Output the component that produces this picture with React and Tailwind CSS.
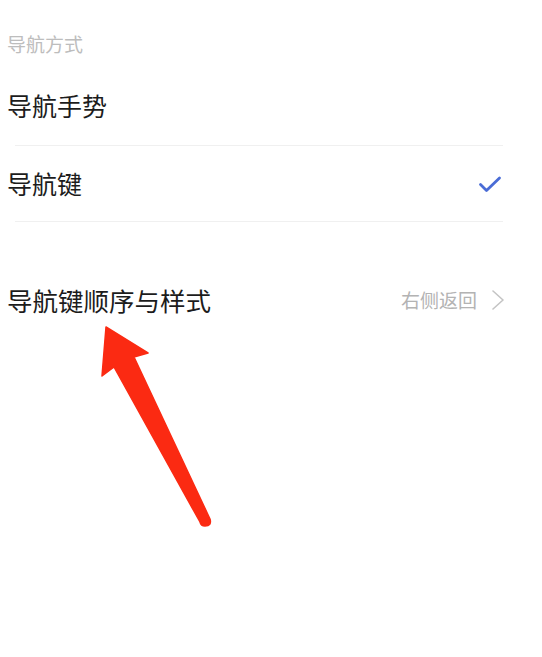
import React from 'react';

const font = { fontFamily: '"Noto Sans CJK SC", "Noto Sans", sans-serif' };

const Divider = () => <div className="ml-[15px] h-px w-[488px] bg-[#f0f0f0]" />;

const Check = () => (
  <svg width="24" height="18" viewBox="0 0 24 18" fill="none">
    <path d="M2.5 9.5 L8.5 15.5 L21.5 3" stroke="#4a6cd6" strokeWidth="2.8" strokeLinecap="round" strokeLinejoin="round" />
  </svg>
);

const Chevron = () => (
  <svg width="14" height="20" viewBox="0 0 14 20" fill="none">
    <path d="M2 1 L12 10 L2 19" stroke="#c4c4c4" strokeWidth="1.6" strokeLinecap="round" strokeLinejoin="round" />
  </svg>
);

const App = () => {
  return (
    <div className="relative h-[657px] w-[542px] overflow-hidden bg-white" style={font}>
      <div className="pl-[7px] pt-[32px] text-[19px] leading-[24px] text-[#bdbdbd]">导航方式</div>

      <div className="mt-[10px] flex h-[79px] items-center pl-[7px] text-[25px] text-[#1c1c1c]">导航手势</div>
      <Divider />

      <div className="flex h-[75px] items-center justify-between pl-[7px] pr-[40px] text-[25px] text-[#1c1c1c]">
        <span>导航键</span>
        <Check />
      </div>
      <Divider />

      <div className="mt-[40px] flex h-[76px] items-center justify-between pl-[7px] pr-[37px]">
        <span className="text-[25.5px] text-[#1c1c1c]">导航键顺序与样式</span>
        <div className="flex items-center gap-[14px]">
          <span className="text-[19px] text-[#b3b3b3]">右侧返回</span>
          <Chevron />
        </div>
      </div>

      {/* red annotation arrow */}
      <svg className="absolute left-0 top-0" width="542" height="657" viewBox="0 0 542 657">
        <path
          d="M106 327 L148 353 L134 357 L210 519 Q212 526 205 526 Q201 526 200 522 L114 367 L102 376 Z"
          fill="#fb2a12"
          stroke="#fb2a12"
          strokeWidth="1.5"
          strokeLinejoin="round"
        />
      </svg>
    </div>
  );
};

export default App;
